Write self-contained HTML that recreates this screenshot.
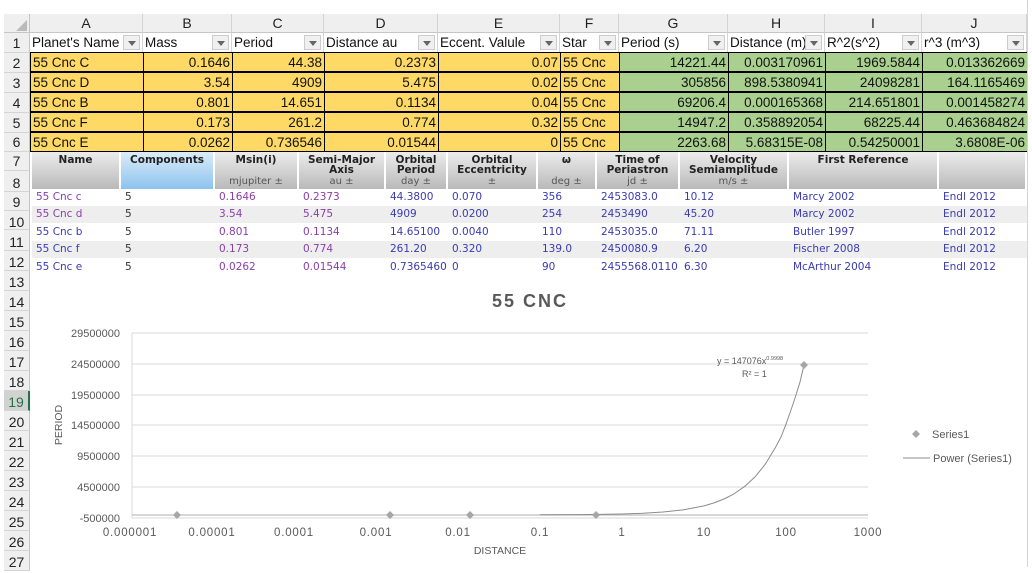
<!DOCTYPE html>
<html><head><meta charset="utf-8"><style>
*{margin:0;padding:0;box-sizing:border-box}
body{width:1032px;height:567px;background:#fff;position:relative;overflow:hidden;font-family:"Liberation Sans",sans-serif}
.a{position:absolute}
.ch{position:absolute;top:14px;height:19px;background:#efefef;border-right:1px solid #d4d4d4;border-bottom:1px solid #c6c6c6;font-size:14px;text-align:center;line-height:19px;color:#222}
.rh{position:absolute;left:4px;width:26px;background:#efefef;border-bottom:1px solid #d4d4d4;border-right:1px solid #c6c6c6;font-size:14px;text-align:center;color:#222}
.c{position:absolute;height:20px;font-size:13.5px;line-height:19px;padding:0 2px;white-space:nowrap;overflow:hidden;color:#111}
.h1{background:#fff;border-right:1px solid #d4d4d4;border-bottom:1px solid #d4d4d4}
.fb{position:absolute;right:2px;top:2px;width:17px;height:15px;background:#f0f0f0;border:1px solid #ccc}
.fb:after{content:"";position:absolute;left:4px;top:5px;border-left:4px solid transparent;border-right:4px solid transparent;border-top:5px solid #666}
.y{background:#ffd966;border:1.5px solid #000;text-align:right}
.g{background:#a9d08e;border:1.5px solid #000;text-align:right}
.th{position:absolute;top:152px;height:37px;background:linear-gradient(#ececec,#b9b9b9);border-right:2px solid #fff;font-family:"DejaVu Sans",sans-serif;font-size:10.5px;font-weight:bold;text-align:center;line-height:10px;padding-top:3px;color:#222}
.th i{position:absolute;bottom:2px;left:0;right:0;font-style:normal;font-weight:normal;color:#555;font-size:10px}
.td{position:absolute;height:17px;font-family:"DejaVu Sans",sans-serif;font-size:10.5px;line-height:17px;padding-left:4px;color:#3b3bb0;white-space:nowrap}
.p{color:#8a3fa8}.k{color:#333}
</style></head><body>
<div class="a" style="left:4px;top:14px;width:26px;height:19px;background:#efefef;border-right:1px solid #c6c6c6;border-bottom:1px solid #c6c6c6"></div>
<div class="a" style="left:16px;top:20px;border-left:11px solid transparent;border-bottom:11px solid #bbb"></div>
<div class="ch" style="left:30px;width:113px">A</div>
<div class="ch" style="left:143px;width:89px">B</div>
<div class="ch" style="left:232px;width:92px">C</div>
<div class="ch" style="left:324px;width:114px">D</div>
<div class="ch" style="left:438px;width:122px">E</div>
<div class="ch" style="left:560px;width:59px">F</div>
<div class="ch" style="left:619px;width:109px">G</div>
<div class="ch" style="left:728px;width:97px">H</div>
<div class="ch" style="left:825px;width:97px">I</div>
<div class="ch" style="left:922px;width:105px">J</div>
<div class="ch" style="left:1027px;width:5px;border:none;background:#fff"></div>
<div class="rh" style="top:33px;height:20px;line-height:20px">1</div>
<div class="rh" style="top:53px;height:20px;line-height:20px">2</div>
<div class="rh" style="top:73px;height:20px;line-height:20px">3</div>
<div class="rh" style="top:93px;height:20px;line-height:20px">4</div>
<div class="rh" style="top:113px;height:20px;line-height:20px">5</div>
<div class="rh" style="top:133px;height:19px;line-height:19px">6</div>
<div class="rh" style="top:152px;height:19px;line-height:19px">7</div>
<div class="rh" style="top:171px;height:21px;line-height:24px">8</div>
<div class="rh" style="top:192px;height:19px;line-height:20px">9</div>
<div class="rh" style="top:211px;height:19px;line-height:22px">10</div>
<div class="rh" style="top:230px;height:21px;line-height:24px">11</div>
<div class="rh" style="top:251px;height:20px;line-height:22px">12</div>
<div class="rh" style="top:271px;height:20px;line-height:22px">13</div>
<div class="rh" style="top:291px;height:20px;line-height:22px">14</div>
<div class="rh" style="top:311px;height:20px;line-height:22px">15</div>
<div class="rh" style="top:331px;height:20px;line-height:22px">16</div>
<div class="rh" style="top:351px;height:20px;line-height:22px">17</div>
<div class="rh" style="top:371px;height:20px;line-height:22px">18</div>
<div class="rh" style="top:391px;height:20px;line-height:22px;background:#d2d2d2;border-right:2px solid #217346;color:#217346">19</div>
<div class="rh" style="top:411px;height:20px;line-height:22px">20</div>
<div class="rh" style="top:431px;height:20px;line-height:22px">21</div>
<div class="rh" style="top:451px;height:20px;line-height:22px">22</div>
<div class="rh" style="top:471px;height:20px;line-height:22px">23</div>
<div class="rh" style="top:491px;height:20px;line-height:22px">24</div>
<div class="rh" style="top:511px;height:20px;line-height:22px">25</div>
<div class="rh" style="top:531px;height:20px;line-height:22px">26</div>
<div class="rh" style="top:551px;height:20px;line-height:22px">27</div>
<div class="c h1" style="left:30px;top:33px;width:113px">Planet's Name<span class="fb"></span></div>
<div class="c h1" style="left:143px;top:33px;width:89px">Mass<span class="fb"></span></div>
<div class="c h1" style="left:232px;top:33px;width:92px">Period<span class="fb"></span></div>
<div class="c h1" style="left:324px;top:33px;width:114px">Distance au<span class="fb"></span></div>
<div class="c h1" style="left:438px;top:33px;width:122px">Eccent. Valule<span class="fb"></span></div>
<div class="c h1" style="left:560px;top:33px;width:59px">Star<span class="fb"></span></div>
<div class="c h1" style="left:619px;top:33px;width:109px">Period (s)<span class="fb"></span></div>
<div class="c h1" style="left:728px;top:33px;width:97px">Distance (m)<span class="fb"></span></div>
<div class="c h1" style="left:825px;top:33px;width:97px">R^2(s^2)<span class="fb"></span></div>
<div class="c h1" style="left:922px;top:33px;width:105px">r^3 (m^3)<span class="fb"></span></div>
<div class="a" style="left:30px;top:52px">
<div class="c y" style="left:0;top:0;width:114px;text-align:left">55 Cnc C</div><div class="c y" style="left:113px;top:0;width:90px">0.1646</div><div class="c y" style="left:202px;top:0;width:93px">44.38</div><div class="c y" style="left:294px;top:0;width:115px">0.2373</div><div class="c y" style="left:408px;top:0;width:123px">0.07</div><div class="c y" style="left:530px;top:0;width:60px;text-align:left">55 Cnc</div><div class="c g" style="left:589px;top:0;width:110px">14221.44</div><div class="c g" style="left:698px;top:0;width:98px">0.003170961</div><div class="c g" style="left:795px;top:0;width:98px">1969.5844</div><div class="c g" style="left:892px;top:0;width:106px">0.013362669</div>
<div class="c y" style="left:0;top:20px;width:114px;text-align:left">55 Cnc D</div><div class="c y" style="left:113px;top:20px;width:90px">3.54</div><div class="c y" style="left:202px;top:20px;width:93px">4909</div><div class="c y" style="left:294px;top:20px;width:115px">5.475</div><div class="c y" style="left:408px;top:20px;width:123px">0.02</div><div class="c y" style="left:530px;top:20px;width:60px;text-align:left">55 Cnc</div><div class="c g" style="left:589px;top:20px;width:110px">305856</div><div class="c g" style="left:698px;top:20px;width:98px">898.5380941</div><div class="c g" style="left:795px;top:20px;width:98px">24098281</div><div class="c g" style="left:892px;top:20px;width:106px">164.1165469</div>
<div class="c y" style="left:0;top:40px;width:114px;text-align:left">55 Cnc B</div><div class="c y" style="left:113px;top:40px;width:90px">0.801</div><div class="c y" style="left:202px;top:40px;width:93px">14.651</div><div class="c y" style="left:294px;top:40px;width:115px">0.1134</div><div class="c y" style="left:408px;top:40px;width:123px">0.04</div><div class="c y" style="left:530px;top:40px;width:60px;text-align:left">55 Cnc</div><div class="c g" style="left:589px;top:40px;width:110px">69206.4</div><div class="c g" style="left:698px;top:40px;width:98px">0.000165368</div><div class="c g" style="left:795px;top:40px;width:98px">214.651801</div><div class="c g" style="left:892px;top:40px;width:106px">0.001458274</div>
<div class="c y" style="left:0;top:60px;width:114px;text-align:left">55 Cnc F</div><div class="c y" style="left:113px;top:60px;width:90px">0.173</div><div class="c y" style="left:202px;top:60px;width:93px">261.2</div><div class="c y" style="left:294px;top:60px;width:115px">0.774</div><div class="c y" style="left:408px;top:60px;width:123px">0.32</div><div class="c y" style="left:530px;top:60px;width:60px;text-align:left">55 Cnc</div><div class="c g" style="left:589px;top:60px;width:110px">14947.2</div><div class="c g" style="left:698px;top:60px;width:98px">0.358892054</div><div class="c g" style="left:795px;top:60px;width:98px">68225.44</div><div class="c g" style="left:892px;top:60px;width:106px">0.463684824</div>
<div class="c y" style="left:0;top:80px;width:114px;text-align:left">55 Cnc E</div><div class="c y" style="left:113px;top:80px;width:90px">0.0262</div><div class="c y" style="left:202px;top:80px;width:93px">0.736546</div><div class="c y" style="left:294px;top:80px;width:115px">0.01544</div><div class="c y" style="left:408px;top:80px;width:123px">0</div><div class="c y" style="left:530px;top:80px;width:60px;text-align:left">55 Cnc</div><div class="c g" style="left:589px;top:80px;width:110px">2263.68</div><div class="c g" style="left:698px;top:80px;width:98px">5.68315E-08</div><div class="c g" style="left:795px;top:80px;width:98px">0.54250001</div><div class="c g" style="left:892px;top:80px;width:106px">3.6808E-06</div>
</div>
<div class="th" style="left:32px;width:89px">Name</div>
<div class="th" style="left:121px;width:94px;background:linear-gradient(#dcecf8,#8cc3ee)">Components</div>
<div class="th" style="left:215px;width:84px">Msin(i)<i>mjupiter ±</i></div>
<div class="th" style="left:299px;width:87px">Semi-Major<br>Axis<i>au ±</i></div>
<div class="th" style="left:386px;width:62px">Orbital<br>Period<i>day ±</i></div>
<div class="th" style="left:448px;width:90px">Orbital<br>Eccentricity<i>±</i></div>
<div class="th" style="left:538px;width:59px">ω<i>deg ±</i></div>
<div class="th" style="left:597px;width:83px">Time of<br>Periastron<i>jd ±</i></div>
<div class="th" style="left:680px;width:109px">Velocity<br>Semiamplitude<i>m/s ±</i></div>
<div class="th" style="left:789px;width:150px">First Reference</div>
<div class="th" style="left:939px;width:88px"></div>
<div class="a" style="left:32px;top:206px;width:995px;height:17px;background:#eeeeee"></div>
<div class="a" style="left:32px;top:241px;width:995px;height:17px;background:#eeeeee"></div>
<div class="a" style="left:0;top:189px">
<div class="td p" style="left:32px;top:0">55 Cnc c</div><div class="td k" style="left:121px;top:0">5</div><div class="td p" style="left:215px;top:0">0.1646</div><div class="td p" style="left:299px;top:0">0.2373</div><div class="td" style="left:386px;top:0">44.3800</div><div class="td" style="left:448px;top:0">0.070</div><div class="td" style="left:538px;top:0">356</div><div class="td" style="left:597px;top:0">2453083.0</div><div class="td" style="left:680px;top:0">10.12</div><div class="td" style="left:789px;top:0">Marcy 2002</div><div class="td" style="left:939px;top:0">Endl 2012</div>
<div class="td p" style="left:32px;top:17px">55 Cnc d</div><div class="td k" style="left:121px;top:17px">5</div><div class="td p" style="left:215px;top:17px">3.54</div><div class="td p" style="left:299px;top:17px">5.475</div><div class="td" style="left:386px;top:17px">4909</div><div class="td" style="left:448px;top:17px">0.0200</div><div class="td" style="left:538px;top:17px">254</div><div class="td" style="left:597px;top:17px">2453490</div><div class="td" style="left:680px;top:17px">45.20</div><div class="td" style="left:789px;top:17px">Marcy 2002</div><div class="td" style="left:939px;top:17px">Endl 2012</div>
<div class="td" style="left:32px;top:35px">55 Cnc b</div><div class="td k" style="left:121px;top:35px">5</div><div class="td p" style="left:215px;top:35px">0.801</div><div class="td p" style="left:299px;top:35px">0.1134</div><div class="td" style="left:386px;top:35px">14.65100</div><div class="td" style="left:448px;top:35px">0.0040</div><div class="td" style="left:538px;top:35px">110</div><div class="td" style="left:597px;top:35px">2453035.0</div><div class="td" style="left:680px;top:35px">71.11</div><div class="td" style="left:789px;top:35px">Butler 1997</div><div class="td" style="left:939px;top:35px">Endl 2012</div>
<div class="td" style="left:32px;top:52px">55 Cnc f</div><div class="td k" style="left:121px;top:52px">5</div><div class="td p" style="left:215px;top:52px">0.173</div><div class="td p" style="left:299px;top:52px">0.774</div><div class="td" style="left:386px;top:52px">261.20</div><div class="td" style="left:448px;top:52px">0.320</div><div class="td" style="left:538px;top:52px">139.0</div><div class="td" style="left:597px;top:52px">2450080.9</div><div class="td" style="left:680px;top:52px">6.20</div><div class="td" style="left:789px;top:52px">Fischer 2008</div><div class="td" style="left:939px;top:52px">Endl 2012</div>
<div class="td" style="left:32px;top:70px">55 Cnc e</div><div class="td k" style="left:121px;top:70px">5</div><div class="td p" style="left:215px;top:70px">0.0262</div><div class="td p" style="left:299px;top:70px">0.01544</div><div class="td" style="left:386px;top:70px">0.7365460</div><div class="td" style="left:448px;top:70px">0</div><div class="td" style="left:538px;top:70px">90</div><div class="td" style="left:597px;top:70px">2455568.0110</div><div class="td" style="left:680px;top:70px">6.30</div><div class="td" style="left:789px;top:70px">McArthur 2004</div><div class="td" style="left:939px;top:70px">Endl 2012</div>
</div>
<div class="a" style="left:1027px;top:0;width:1px;height:567px;background:#d4d4d4"></div>
<svg class="a" style="left:0;top:0" width="1032" height="567" font-family="Liberation Sans, sans-serif">
<text x="530" y="307" text-anchor="middle" font-size="18" font-weight="bold" fill="#595959" letter-spacing="2">55 CNC</text>
<g stroke="#d9d9d9" stroke-width="1">
<line x1="132" y1="333" x2="868" y2="333"/><line x1="132" y1="364" x2="868" y2="364"/><line x1="132" y1="395" x2="868" y2="395"/><line x1="132" y1="425" x2="868" y2="425"/><line x1="132" y1="456" x2="868" y2="456"/><line x1="132" y1="487" x2="868" y2="487"/><line x1="132" y1="518" x2="868" y2="518"/><line x1="132" y1="333" x2="132" y2="518"/>
</g>
<line x1="132" y1="515" x2="868" y2="515" stroke="#bfbfbf" stroke-width="1.2"/>
<g font-size="11" fill="#595959" text-anchor="end">
<text x="120" y="337">29500000</text><text x="120" y="368">24500000</text><text x="120" y="399">19500000</text><text x="120" y="429">14500000</text><text x="120" y="460">9500000</text><text x="120" y="491">4500000</text><text x="120" y="522">-500000</text>
</g>
<g font-size="11.5" fill="#595959" text-anchor="middle" letter-spacing="0.8">
<text x="130" y="536">0.000001</text><text x="212" y="536">0.00001</text><text x="294" y="536">0.0001</text><text x="376" y="536">0.001</text><text x="458" y="536">0.01</text><text x="540" y="536">0.1</text><text x="622" y="536">1</text><text x="704" y="536">10</text><text x="786" y="536">100</text><text x="868" y="536">1000</text>
</g>
<text x="500" y="554" text-anchor="middle" font-size="10.5" fill="#595959">DISTANCE</text>
<text transform="translate(62,425) rotate(-90)" text-anchor="middle" font-size="10.5" fill="#595959">PERIOD</text>
<path d="M540 514.8 L581 514.6 L622 514 L643 513.3 L663 512 L683 509.9 L704 505.9 L714 502.9 L724 499 L734 493.9 L745 486.2 L755 476.9 L765 464.6 L775 448.3 L781 437 L786 424.2 L791 410 L795 398.1 L800 382 L804 365" fill="none" stroke="#8c8c8c" stroke-width="1" stroke-linejoin="round"/>
<g fill="#a6a6a6">
<path d="M177 511 l4 4 -4 4 -4 -4z"/><path d="M390 511 l4 4 -4 4 -4 -4z"/><path d="M470 511 l4 4 -4 4 -4 -4z"/><path d="M596 511 l4 4 -4 4 -4 -4z"/><path d="M804 361 l4 4 -4 4 -4 -4z"/>
<path d="M916 430 l4 4 -4 4 -4 -4z"/>
</g>
<text x="717" y="364" font-size="9" fill="#595959">y = 147076x<tspan font-size="5.5" dy="-4">0.9998</tspan></text>
<text x="742" y="377" font-size="9" fill="#595959">R² = 1</text>
<text x="932" y="438" font-size="11" fill="#595959">Series1</text>
<line x1="903" y1="458" x2="930" y2="458" stroke="#8c8c8c"/>
<text x="933" y="462" font-size="11" fill="#595959">Power (Series1)</text>
</svg>
</body></html>
